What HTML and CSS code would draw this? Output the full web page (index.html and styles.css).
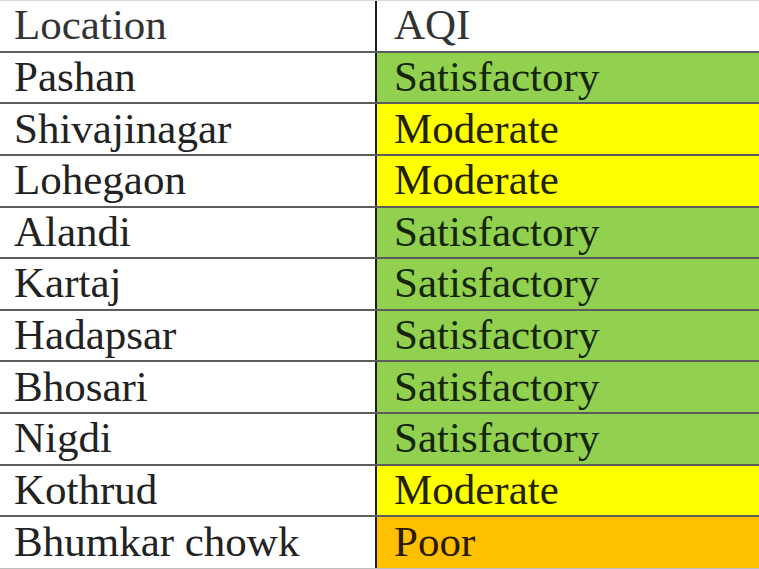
FILE: index.html
```html
<!DOCTYPE html>
<html>
<head>
<meta charset="utf-8">
<link rel="stylesheet" href="styles.css">
</head>
<body>
<div class="aqi-table">
  <div class="row header"><div class="loc">Location</div><div class="val">AQI</div></div>
  <div class="row"><div class="loc">Pashan</div><div class="val sat">Satisfactory</div></div>
  <div class="row"><div class="loc">Shivajinagar</div><div class="val mod">Moderate</div></div>
  <div class="row"><div class="loc">Lohegaon</div><div class="val mod">Moderate</div></div>
  <div class="row"><div class="loc">Alandi</div><div class="val sat">Satisfactory</div></div>
  <div class="row"><div class="loc">Kartaj</div><div class="val sat">Satisfactory</div></div>
  <div class="row"><div class="loc">Hadapsar</div><div class="val sat">Satisfactory</div></div>
  <div class="row"><div class="loc">Bhosari</div><div class="val sat">Satisfactory</div></div>
  <div class="row"><div class="loc">Nigdi</div><div class="val sat">Satisfactory</div></div>
  <div class="row"><div class="loc">Kothrud</div><div class="val mod">Moderate</div></div>
  <div class="row last"><div class="loc">Bhumkar chowk</div><div class="val poor">Poor</div></div>
</div>
</body>
</html>
```
FILE: styles.css
```css
html, body {
  margin: 0;
  padding: 0;
  background: #ffffff;
}
.aqi-table {
  width: 759px;
  height: 569px;
  display: grid;
  grid-template-rows: repeat(11, 1fr);
  border-top: 1px solid #d6d6d6;
  box-sizing: border-box;
  font-family: "Liberation Serif", "Tinos", "Times New Roman", "DejaVu Serif", serif;
  font-size: 43px;
  color: #222;
}
.row {
  display: flex;
  border-bottom: 2px solid #5c5c5c;
  min-height: 0;
}
.row.last {
  border-bottom: 1px solid #bdbdbd;
}
.loc {
  width: 377px;
  flex: none;
  border-right: 2px solid #1e1e1e;
  padding-left: 14px;
  display: flex;
  align-items: center;
  box-sizing: border-box;
  line-height: 1;
  padding-bottom: 2px;
}
.val {
  flex: 1;
  padding-left: 17px;
  display: flex;
  align-items: center;
  line-height: 1;
  padding-bottom: 2px;
}
.val.sat { background: #92d050; color: #14250a; }
.val.mod { background: #ffff00; color: #222200; }
.val.poor { background: #ffc000; color: #2a1a00; }
.header .loc, .header .val { color: #333; }
```
